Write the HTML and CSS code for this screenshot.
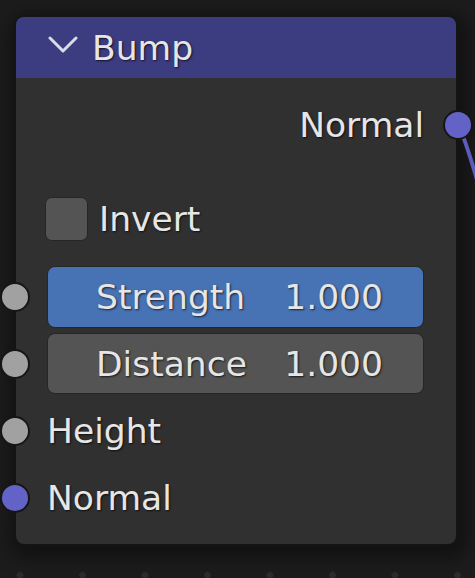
FILE: index.html
```html
<!DOCTYPE html>
<html>
<head>
<meta charset="utf-8">
<link rel="stylesheet" href="styles.css">
</head>
<body>
<div class="node">
  <div class="header">
    <svg class="chevron" width="30" height="17" viewBox="0 0 30 17"><path d="M2 2 L15 15 L28 2" fill="none" stroke="#dcdce6" stroke-width="3" stroke-linecap="round" stroke-linejoin="round"/></svg>
    <span class="title">Bump</span>
  </div>
  <div class="content">
    <div class="row row-out">
      <span class="label">Normal</span>
      <span class="socket socket-right vector"></span>
    </div>
    <div class="row row-check">
      <span class="checkbox"></span>
      <span class="label">Invert</span>
    </div>
    <div class="row row-field">
      <span class="socket socket-left float"></span>
      <div class="field field-active"><span class="label">Strength</span><span class="value">1.000</span></div>
    </div>
    <div class="row row-field">
      <span class="socket socket-left float"></span>
      <div class="field"><span class="label">Distance</span><span class="value">1.000</span></div>
    </div>
    <div class="row row-in">
      <span class="socket socket-left float"></span>
      <span class="label">Height</span>
    </div>
    <div class="row row-in">
      <span class="socket socket-left vector"></span>
      <span class="label">Normal</span>
    </div>
  </div>
</div>
<svg class="link" width="475" height="578" viewBox="0 0 475 578"><path d="M458 125 C 462 131 467 145 480 190" fill="none" stroke="#5c5cba" stroke-width="4"/></svg>
</body>
</html>
```

FILE: styles.css
```css
html, body {
  margin: 0;
  padding: 0;
}
body {
  width: 475px;
  height: 578px;
  overflow: hidden;
  position: relative;
  background-color: #1c1c1c;
  background-image: radial-gradient(circle at center, #2c2c2c 0, #2c2c2c 3px, transparent 3.6px);
  background-size: 62.5px 62.5px;
  background-repeat: repeat-x;
  background-position: -11.25px 543.75px;
  font-family: "DejaVu Sans", "Liberation Sans", sans-serif;
  color: #e6e6e6;
}
.node {
  position: relative;
  margin: 15px 0 0 14px;
  width: 440px;
  border: 2px solid #141414;
  border-radius: 10px;
  background: #303030;
  box-shadow: 3px 6px 18px 7px rgba(0, 0, 0, 0.38);
}
.header {
  height: 61px;
  background: #3c3c80;
  border-radius: 8px 8px 0 0;
  display: flex;
  align-items: center;
  padding-left: 32px;
  gap: 14px;
}
.chevron {
  display: block;
  margin-top: -6px;
}
.title, .label, .value {
  font-size: 34.5px;
  text-shadow: 1px 1px 2px rgba(0, 0, 0, 0.7);
  white-space: nowrap;
}
.content {
  padding: 13px 0 13px;
  display: flex;
  flex-direction: column;
}
.row {
  position: relative;
  height: 67px;
  display: flex;
  align-items: center;
}
.row-out {
  justify-content: flex-end;
  padding-right: 32px;
  margin-bottom: 27px;
}
.row-check {
  padding-left: 29px;
  gap: 11px;
  margin-bottom: 11px;
}
.checkbox {
  width: 41px;
  height: 42px;
  box-sizing: content-box;
  background: #545454;
  border: 1px solid #262626;
  border-radius: 7px;
}
.row-field {
  padding: 0 32px 0 31px;
}
.field {
  flex: 1;
  height: 59px;
  border: 1px solid #262626;
  border-radius: 8px;
  background: #545454;
  display: flex;
  align-items: center;
  justify-content: space-between;
  padding: 0 40px 0 48px;
}
.field-active {
  background: #4772b3;
  height: 60px;
}
.row-in {
  padding-left: 31px;
}
.socket {
  position: absolute;
  z-index: 2;
  top: 50%;
  width: 26px;
  height: 26px;
  margin-top: -15px;
  border: 2px solid #161616;
  border-radius: 50%;
}
.socket-left {
  left: -16px;
}
.socket-right {
  right: -17px;
}
.float {
  background: #a1a1a1;
}
.vector {
  background: #6363c7;
}
.link {
  position: absolute;
  left: 0;
  top: 0;
  z-index: 1;
}
```
